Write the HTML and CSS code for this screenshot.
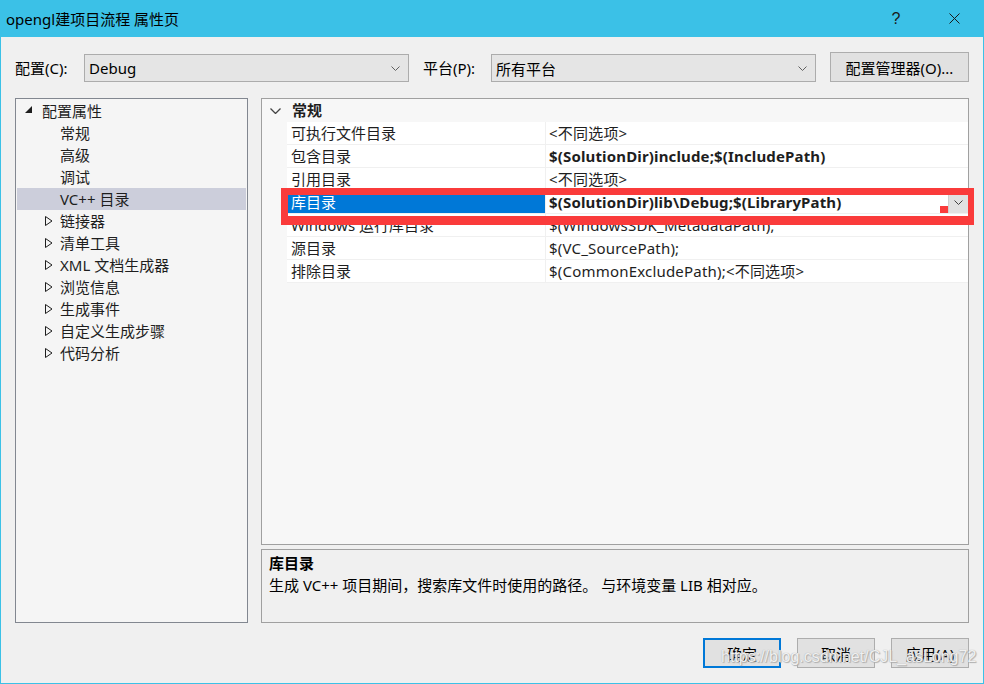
FILE: index.html
```html
<!DOCTYPE html>
<html lang="zh-CN">
<head>
  <meta charset="UTF-8" />
  <title>opengl建项目流程 属性页</title>
  <link rel="stylesheet" href="styles.css">
</head>
<body>
<div class="window">
  <div class="titlebar">
    <span class="title">opengl建项目流程 属性页</span>
    <span class="tb-btn help">?</span>
    <span class="tb-btn close">
      <svg width="11" height="11" viewBox="0 0 11 11"><path d="M0.5 0.5 L10.5 10.5 M10.5 0.5 L0.5 10.5" stroke="#1a1a1a" stroke-width="1" fill="none"/></svg>
    </span>
  </div>

  <div class="content">
    <div class="config-row">
      <label class="lbl">配置(C):</label>
      <div class="combo">
        <span>Debug</span>
        <svg class="chev" width="9" height="5" viewBox="0 0 9 5"><path d="M0.5 0.5 L4.5 4.5 L8.5 0.5" stroke="#606060" fill="none"/></svg>
      </div>
      <label class="lbl plat">平台(P):</label>
      <div class="combo">
        <span>所有平台</span>
        <svg class="chev" width="9" height="5" viewBox="0 0 9 5"><path d="M0.5 0.5 L4.5 4.5 L8.5 0.5" stroke="#606060" fill="none"/></svg>
      </div>
      <button class="btn mgr">配置管理器(O)...</button>
    </div>

    <div class="main">
      <div class="tree">
        <div class="node root">
          <svg class="exp" width="8" height="8" viewBox="0 0 8 8"><path d="M7 0 L7 7 L0 7 Z" fill="#1e1e1e"/></svg>
          <span>配置属性</span>
        </div>
        <div class="node leaf">常规</div>
        <div class="node leaf">高级</div>
        <div class="node leaf">调试</div>
        <div class="node leaf selected">VC++ 目录</div>
        <div class="node sub"><svg class="exp" width="8" height="10" viewBox="0 0 8 10"><path d="M0.5 0.5 L7 5 L0.5 9.5 Z" stroke="#1e1e1e" fill="none"/></svg><span>链接器</span></div>
        <div class="node sub"><svg class="exp" width="8" height="10" viewBox="0 0 8 10"><path d="M0.5 0.5 L7 5 L0.5 9.5 Z" stroke="#1e1e1e" fill="none"/></svg><span>清单工具</span></div>
        <div class="node sub"><svg class="exp" width="8" height="10" viewBox="0 0 8 10"><path d="M0.5 0.5 L7 5 L0.5 9.5 Z" stroke="#1e1e1e" fill="none"/></svg><span>XML 文档生成器</span></div>
        <div class="node sub"><svg class="exp" width="8" height="10" viewBox="0 0 8 10"><path d="M0.5 0.5 L7 5 L0.5 9.5 Z" stroke="#1e1e1e" fill="none"/></svg><span>浏览信息</span></div>
        <div class="node sub"><svg class="exp" width="8" height="10" viewBox="0 0 8 10"><path d="M0.5 0.5 L7 5 L0.5 9.5 Z" stroke="#1e1e1e" fill="none"/></svg><span>生成事件</span></div>
        <div class="node sub"><svg class="exp" width="8" height="10" viewBox="0 0 8 10"><path d="M0.5 0.5 L7 5 L0.5 9.5 Z" stroke="#1e1e1e" fill="none"/></svg><span>自定义生成步骤</span></div>
        <div class="node sub"><svg class="exp" width="8" height="10" viewBox="0 0 8 10"><path d="M0.5 0.5 L7 5 L0.5 9.5 Z" stroke="#1e1e1e" fill="none"/></svg><span>代码分析</span></div>
      </div>

      <div class="right">
        <div class="grid">
          <div class="grid-head">
            <span class="gutter">
              <svg width="11" height="6" viewBox="0 0 11 6"><path d="M0.5 0.5 L5.5 5.5 L10.5 0.5" stroke="#444" stroke-width="1.3" fill="none"/></svg>
            </span>
            <span class="cat">常规</span>
          </div>
          <div class="row"><span class="gutter"></span><span class="name">可执行文件目录</span><span class="val">&lt;不同选项&gt;</span></div>
          <div class="row"><span class="gutter"></span><span class="name">包含目录</span><span class="val bold">$(SolutionDir)include;$(IncludePath)</span></div>
          <div class="row"><span class="gutter"></span><span class="name">引用目录</span><span class="val">&lt;不同选项&gt;</span></div>
          <div class="row active"><span class="gutter"></span><span class="name">库目录</span><span class="val bold">$(SolutionDir)lib\Debug;$(LibraryPath)<span class="drop"><svg width="9" height="5" viewBox="0 0 9 5"><path d="M0.5 0.5 L4.5 4.5 L8.5 0.5" stroke="#404040" fill="none"/></svg></span></span></div>
          <div class="row"><span class="gutter"></span><span class="name">Windows 运行库目录</span><span class="val">$(WindowsSDK_MetadataPath);</span></div>
          <div class="row"><span class="gutter"></span><span class="name">源目录</span><span class="val">$(VC_SourcePath);</span></div>
          <div class="row"><span class="gutter"></span><span class="name">排除目录</span><span class="val">$(CommonExcludePath);&lt;不同选项&gt;</span></div>
        </div>
        <div class="desc">
          <div class="desc-title">库目录</div>
          <div class="desc-text">生成 VC++ 项目期间，搜索库文件时使用的路径。 与环境变量 LIB 相对应。</div>
        </div>
      </div>
    </div>

    <div class="footer">
      <button class="btn ok">确定</button>
      <button class="btn">取消</button>
      <button class="btn">应用(A)</button>
    </div>
  </div>

  <!-- annotation drawn on top of the screenshot -->
  <div class="mark"></div>
  <div class="mark-dot"></div>
  <div class="watermark">https://blog.csdn.net/CJL_asLong72</div>
</div>
</body>
</html>
```

FILE: styles.css
```css
* { box-sizing: border-box; }
body {
  margin: 0;
  background: #f0f0f0;
  font-family: "Noto Sans", "Noto Sans CJK SC", sans-serif;
  font-size: 15px;
  color: #1e1e1e;
}
.window {
  position: relative;
  width: 984px;
  height: 684px;
  border: 1px solid #3bc1e7;
  border-top: none;
  display: flex;
  flex-direction: column;
  overflow: hidden;
}
.titlebar {
  height: 37px;
  background: #3bc1e7;
  display: flex;
  align-items: center;
  padding-left: 5px;
  flex-shrink: 0;
}
.title {
  flex: 1;
  color: #000;
  line-height: 20px;
}
.tb-btn {
  width: 58px;
  text-align: center;
  color: #1a1a1a;
  font-family: "Liberation Sans", sans-serif;
  font-size: 16px;
}
.tb-btn.help { margin-right: 0; }
.tb-btn.close { width: 58px; display: flex; justify-content: center; }

.content {
  flex: 1;
  padding: 0 14px;
  display: flex;
  flex-direction: column;
}
.config-row {
  margin-top: 15px;
  height: 30px;
  display: flex;
  align-items: flex-end;
}
.lbl {
  width: 69px;
  height: 28px;
  line-height: 28px;
  color: #000;
}
.lbl.plat { width: 68px; margin-left: 14px; }
.combo {
  width: 325px;
  height: 28px;
  background: #e5e5e5;
  border: 1px solid #acacac;
  display: flex;
  align-items: center;
  padding-left: 4px;
  padding-right: 8px;
  color: #000;
}
.combo span { flex: 1; }
.btn {
  font-family: inherit;
  font-size: 15px;
  color: #000;
  background: #e1e1e1;
  border: 1px solid #adadad;
  padding: 0;
}
.mgr {
  width: 139px;
  height: 30px;
  margin-left: 14px;
}

.main {
  margin-top: 16px;
  height: 525px;
  display: flex;
  gap: 13px;
}
.tree {
  width: 233px;
  background: #f5f5f5;
  border: 1px solid #828790;
  padding: 1px 1px;
}
.node {
  height: 22px;
  line-height: 22px;
  display: flex;
  align-items: center;
  white-space: nowrap;
}
.node .exp { flex-shrink: 0; }
.root { padding-left: 8px; }
.root .exp { margin-right: 9px; margin-top: -2px; }
.leaf { padding-left: 43px; }
.sub { padding-left: 28px; }
.sub .exp { margin-right: 7px; }
.selected { background: #cccedb; }

.right {
  width: 708px;
  display: flex;
  flex-direction: column;
  gap: 4px;
}
.grid {
  height: 447px;
  background: #f7f7f7;
  border: 1px solid #a0a0a0;
}
.grid-head, .row {
  display: flex;
  height: 23px;
  line-height: 22px;
}
.gutter {
  width: 25px;
  flex-shrink: 0;
  display: flex;
  align-items: center;
  justify-content: center;
}
.grid-head .gutter { justify-content: flex-start; padding-left: 8px; }
.cat {
  font-weight: bold;
  padding-left: 5px;
  color: #1e1e1e;
}
.row .name {
  width: 259px;
  background: #fff;
  border-bottom: 1px solid #f0f0f0;
  border-right: 1px solid #f0f0f0;
  padding-left: 4px;
  white-space: nowrap;
}
.row .val {
  flex: 1;
  background: #fff;
  border-bottom: 1px solid #f0f0f0;
  padding-left: 3px;
  white-space: nowrap;
  display: flex;
  align-items: center;
  letter-spacing: 0.2px;
}
.val.bold { font-weight: bold; letter-spacing: 0.15px; }
.row.active .name {
  background: #0078d7;
  color: #fff;
}
.drop {
  margin-left: auto;
  width: 20px;
  height: 22px;
  background: #e1e1e1;
  border-left: 1px solid #d0d0d0;
  display: flex;
  align-items: center;
  justify-content: center;
  font-weight: normal;
}

.desc {
  height: 74px;
  border: 1px solid #a0a0a0;
  padding: 2px 7px;
  color: #000;
}
.desc-title {
  font-weight: bold;
  line-height: 22px;
}
.desc-text {
  line-height: 22px;
}

.footer {
  margin-top: 15px;
  display: flex;
  justify-content: flex-end;
  gap: 16px;
}
.footer .btn {
  width: 78px;
  height: 30px;
}
.footer .btn.ok {
  border: 2px solid #0078d7;
}

.mark {
  position: absolute;
  left: 280px;
  top: 188px;
  width: 693px;
  height: 37px;
  border: 7px solid #fa3b3b;
  border-right-width: 6px;
  border-bottom-width: 9px;
}
.mark-dot {
  position: absolute;
  left: 939px;
  top: 206px;
  width: 8px;
  height: 7px;
  background: #fa3b3b;
}
.watermark {
  position: absolute;
  left: 720px;
  top: 648px;
  font-family: "Liberation Sans", sans-serif;
  font-size: 16px;
  color: rgba(255, 255, 255, 0.85);
  text-shadow: 0 0 1px #9a9a9a, 1px 1px 1px #b0b0b0;
  white-space: nowrap;
}
```
